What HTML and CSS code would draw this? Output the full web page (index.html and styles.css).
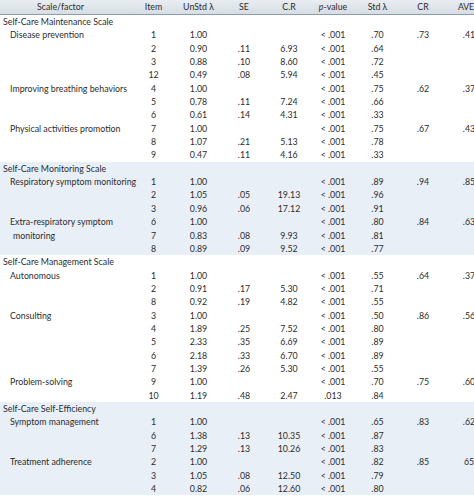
FILE: index.html
```html
<!DOCTYPE html>
<html>
<head>
<meta charset="utf-8">
<link rel="stylesheet" href="styles.css">
</head>
<body>
<div class="frame">
<table class="cfa">
<colgroup>
<col class="c-name"><col class="c-item"><col class="c-un"><col class="c-se"><col class="c-cr"><col class="c-p"><col class="c-std"><col class="c-cr2"><col class="c-ave">
</colgroup>
<thead>
<tr><th class="name-h">Scale/factor</th><th>Item</th><th>UnStd λ</th><th>SE</th><th>C.R</th><th><i>p</i>-value</th><th>Std λ</th><th>CR</th><th class="ave-h">AVE</th></tr>
</thead>
<tbody>
<tr><td class="scale" colspan="9">Self-Care Maintenance Scale</td></tr>
<tr><td class="factor">Disease prevention</td><td>1</td><td>1.00</td><td></td><td></td><td>&lt; .001</td><td>.70</td><td>.73</td><td>.41</td></tr>
<tr><td></td><td>2</td><td>0.90</td><td>.11</td><td>6.93</td><td>&lt; .001</td><td>.64</td><td></td><td></td></tr>
<tr><td></td><td>3</td><td>0.88</td><td>.10</td><td>8.60</td><td>&lt; .001</td><td>.72</td><td></td><td></td></tr>
<tr><td></td><td>12</td><td>0.49</td><td>.08</td><td>5.94</td><td>&lt; .001</td><td>.45</td><td></td><td></td></tr>
<tr><td class="factor">Improving breathing behaviors</td><td>4</td><td>1.00</td><td></td><td></td><td>&lt; .001</td><td>.75</td><td>.62</td><td>.37</td></tr>
<tr><td></td><td>5</td><td>0.78</td><td>.11</td><td>7.24</td><td>&lt; .001</td><td>.66</td><td></td><td></td></tr>
<tr><td></td><td>6</td><td>0.61</td><td>.14</td><td>4.31</td><td>&lt; .001</td><td>.33</td><td></td><td></td></tr>
<tr><td class="factor">Physical activities promotion</td><td>7</td><td>1.00</td><td></td><td></td><td>&lt; .001</td><td>.75</td><td>.67</td><td>.43</td></tr>
<tr><td></td><td>8</td><td>1.07</td><td>.21</td><td>5.13</td><td>&lt; .001</td><td>.78</td><td></td><td></td></tr>
<tr><td></td><td>9</td><td>0.47</td><td>.11</td><td>4.16</td><td>&lt; .001</td><td>.33</td><td></td><td></td></tr>
</tbody>
<tbody class="shade">
<tr><td class="scale" colspan="9">Self-Care Monitoring Scale</td></tr>
<tr><td class="factor">Respiratory symptom monitoring</td><td>1</td><td>1.00</td><td></td><td></td><td>&lt; .001</td><td>.89</td><td>.94</td><td>.85</td></tr>
<tr><td></td><td>2</td><td>1.05</td><td>.05</td><td>19.13</td><td>&lt; .001</td><td>.96</td><td></td><td></td></tr>
<tr><td></td><td>3</td><td>0.96</td><td>.06</td><td>17.12</td><td>&lt; .001</td><td>.91</td><td></td><td></td></tr>
<tr><td class="factor">Extra-respiratory symptom</td><td>6</td><td>1.00</td><td></td><td></td><td>&lt; .001</td><td>.80</td><td>.84</td><td>.63</td></tr>
<tr><td class="factor cont">monitoring</td><td>7</td><td>0.83</td><td>.08</td><td>9.93</td><td>&lt; .001</td><td>.81</td><td></td><td></td></tr>
<tr><td></td><td>8</td><td>0.89</td><td>.09</td><td>9.52</td><td>&lt; .001</td><td>.77</td><td></td><td></td></tr>
</tbody>
<tbody>
<tr><td class="scale" colspan="9">Self-Care Management Scale</td></tr>
<tr><td class="factor">Autonomous</td><td>1</td><td>1.00</td><td></td><td></td><td>&lt; .001</td><td>.55</td><td>.64</td><td>.37</td></tr>
<tr><td></td><td>2</td><td>0.91</td><td>.17</td><td>5.30</td><td>&lt; .001</td><td>.71</td><td></td><td></td></tr>
<tr><td></td><td>8</td><td>0.92</td><td>.19</td><td>4.82</td><td>&lt; .001</td><td>.55</td><td></td><td></td></tr>
<tr><td class="factor">Consulting</td><td>3</td><td>1.00</td><td></td><td></td><td>&lt; .001</td><td>.50</td><td>.86</td><td>.56</td></tr>
<tr><td></td><td>4</td><td>1.89</td><td>.25</td><td>7.52</td><td>&lt; .001</td><td>.80</td><td></td><td></td></tr>
<tr><td></td><td>5</td><td>2.33</td><td>.35</td><td>6.69</td><td>&lt; .001</td><td>.89</td><td></td><td></td></tr>
<tr><td></td><td>6</td><td>2.18</td><td>.33</td><td>6.70</td><td>&lt; .001</td><td>.89</td><td></td><td></td></tr>
<tr><td></td><td>7</td><td>1.39</td><td>.26</td><td>5.30</td><td>&lt; .001</td><td>.55</td><td></td><td></td></tr>
<tr><td class="factor">Problem-solving</td><td>9</td><td>1.00</td><td></td><td></td><td>&lt; .001</td><td>.70</td><td>.75</td><td>.60</td></tr>
<tr><td></td><td>10</td><td>1.19</td><td>.48</td><td>2.47</td><td>.013</td><td>.84</td><td></td><td></td></tr>
</tbody>
<tbody class="shade">
<tr><td class="scale" colspan="9">Self-Care Self-Efficiency</td></tr>
<tr><td class="factor">Symptom management</td><td>1</td><td>1.00</td><td></td><td></td><td>&lt; .001</td><td>.65</td><td>.83</td><td>.62</td></tr>
<tr><td></td><td>6</td><td>1.38</td><td>.13</td><td>10.35</td><td>&lt; .001</td><td>.87</td><td></td><td></td></tr>
<tr><td></td><td>7</td><td>1.29</td><td>.13</td><td>10.26</td><td>&lt; .001</td><td>.83</td><td></td><td></td></tr>
<tr><td class="factor">Treatment adherence</td><td>2</td><td>1.00</td><td></td><td></td><td>&lt; .001</td><td>.82</td><td>.85</td><td>65</td></tr>
<tr><td></td><td>3</td><td>1.05</td><td>.08</td><td>12.50</td><td>&lt; .001</td><td>.79</td><td></td><td></td></tr>
<tr><td></td><td>4</td><td>0.82</td><td>.06</td><td>12.60</td><td>&lt; .001</td><td>.80</td><td></td><td></td></tr>
</tbody>
</table>
</div>
</body>
</html>
```
FILE: styles.css
```css
html, body {
  margin: 0;
  padding: 0;
  background: #ffffff;
}
.frame {
  width: 474px;
  height: 496px;
  overflow: hidden;
}
.cfa {
  width: 492px;
  border-collapse: collapse;
  table-layout: fixed;
  font-family: Lato, "Liberation Sans", sans-serif;
  font-size: 8.8px;
  color: #2c2c2c;
}
.c-name { width: 131px; }
.c-item { width: 45px; }
.c-un { width: 45px; }
.c-se { width: 46px; }
.c-cr { width: 44px; }
.c-p { width: 44px; }
.c-std { width: 45px; }
.c-cr2 { width: 46px; }
.c-ave { width: 46px; }
.cfa th {
  height: 14px;
  padding: 0;
  font-weight: normal;
  text-align: center;
  white-space: nowrap;
  background: linear-gradient(#e9edf1, #d6dde4);
  border-bottom: 1px solid #8d9cad;
  line-height: 14px;
}
.cfa th.name-h {
  padding-right: 10px;
}
.cfa th.ave-h {
  text-align: left;
  padding-left: 12px;
  letter-spacing: -0.2px;
}
.cfa td {
  height: 13.34px;
  padding: 0;
  line-height: 13.34px;
  text-align: center;
  white-space: nowrap;
}
.cfa td.scale {
  text-align: left;
  padding-left: 3px;
}
.cfa td.factor {
  text-align: left;
  padding-left: 10px;
}
.cfa td.cont {
  padding-left: 13px;
}
.shade td {
  background: #e8eff7;
}
```
